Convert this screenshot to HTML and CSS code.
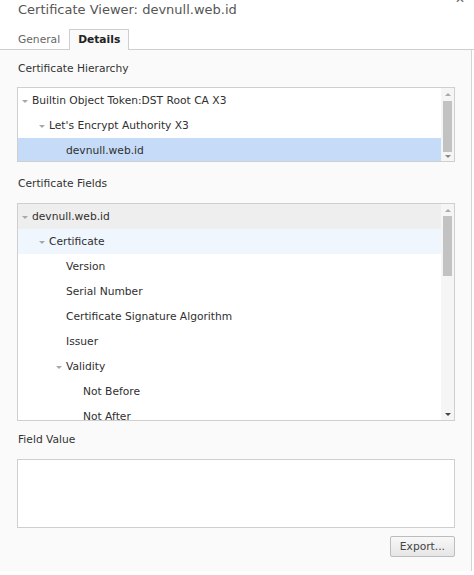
FILE: index.html
```html
<!DOCTYPE html>
<html lang="en">
<head>
    <meta charset="UTF-8">
    <title>Certificate Viewer: devnull.web.id</title>
    <link rel="stylesheet" href="styles.css">
</head>
<body>
<!-- title bar -->
<div class="titlebar">
    <div class="title">Certificate Viewer: devnull.web.id</div>
    <div class="close">✕</div>
</div>

<!-- tabs -->
<div class="tabs">
    <div class="tab">General</div>
    <div class="tab active">Details</div>
</div>

<div class="panel">
    <div class="section-label first">Certificate Hierarchy</div>
    <div class="tree hierarchy">
        <div class="rows">
            <div class="row lv0"><span class="twisty"></span>Builtin Object Token:DST Root CA X3</div>
            <div class="row lv1"><span class="twisty"></span>Let's Encrypt Authority X3</div>
            <div class="row lv2 selected"><span class="leaf"></span>devnull.web.id</div>
        </div>
        <div class="scrollbar">
            <div class="sb-btn up"><span class="arrow-up light"></span></div>
            <div class="sb-thumb"></div>
            <div class="sb-space"></div>
            <div class="sb-btn down"><span class="arrow-down"></span></div>
        </div>
    </div>

    <div class="section-label">Certificate Fields</div>
    <div class="tree fields">
        <div class="rows">
            <div class="row lv0 inactive"><span class="twisty"></span>devnull.web.id</div>
            <div class="row lv1 hover"><span class="twisty"></span>Certificate</div>
            <div class="row lv2"><span class="leaf"></span>Version</div>
            <div class="row lv2"><span class="leaf"></span>Serial Number</div>
            <div class="row lv2"><span class="leaf"></span>Certificate Signature Algorithm</div>
            <div class="row lv2"><span class="leaf"></span>Issuer</div>
            <div class="row lv2"><span class="twisty"></span>Validity</div>
            <div class="row lv3"><span class="leaf"></span>Not Before</div>
            <div class="row lv3"><span class="leaf"></span>Not After</div>
        </div>
        <div class="scrollbar">
            <div class="sb-btn up"><span class="arrow-up light"></span></div>
            <div class="sb-thumb"></div>
            <div class="sb-space"></div>
            <div class="sb-btn down"><span class="arrow-down dark"></span></div>
        </div>
    </div>

    <div class="section-label">Field Value</div>
    <div class="value-box"></div>

    <div class="buttons">
        <button type="button">Export...</button>
    </div>
</div>
</body>
</html>
```

FILE: styles.css
```css
body {
    margin: 0;
    width: 474px;
    font-family: "DejaVu Sans", "Liberation Sans", sans-serif;
    font-size: 10.7px;
    color: #333;
    background-color: #fff;
}

/* title bar */
.titlebar {
    display: flex;
    justify-content: space-between;
    height: 29px;
    padding-left: 18px;
}

.title {
    font-size: 13px;
    line-height: 20px;
    color: #555;
}

.close {
    font-size: 12px;
    line-height: 12px;
    margin-top: -7px;
    margin-right: 9px;
    color: #666;
}

/* tabs */
.tabs {
    display: flex;
    height: 20px;
    padding-left: 9px;
    border-bottom: 1px solid #cfcfcf;
}

.tab {
    height: 19px;
    line-height: 19px;
    padding: 0 8px;
    border: 1px solid transparent;
    border-bottom: none;
    color: #666;
}

.tab.active {
    height: 20px;
    margin-bottom: -1px;
    border-color: #cfcfcf;
    background-color: #fafafa;
    color: #222;
    font-weight: bold;
}

/* content */
.panel {
    width: 438px;
    padding: 8px 16px 14px 17px;
    background-color: #fafafa;
    border-right: 1px solid #d4d4d4;
}

.section-label {
    line-height: 22px;
    padding-left: 1px;
    margin-top: 8px;
    margin-bottom: 8px;
}

.section-label.first {
    margin-top: 0;
    margin-bottom: 7px;
}

.tree + .section-label {
    margin-top: 11px;
}

.tree.fields + .section-label {
    margin-top: 8px;
}

/* tree views */
.tree {
    display: flex;
    border: 1px solid #cfcfcf;
    background-color: #fff;
    overflow: hidden;
}

.tree.hierarchy {
    height: 73px;
}

.tree.fields {
    height: 216px;
}

.rows {
    flex: 1;
    overflow: hidden;
}

.row {
    height: 25px;
    line-height: 25px;
    white-space: nowrap;
    color: #2f2f2f;
}

.row.lv0 { padding-left: 4px; }
.row.lv1 { padding-left: 21px; }
.row.lv2 { padding-left: 38px; }
.row.lv3 { padding-left: 55px; }

.row.selected {
    background-color: #c6dbf7;
}

.row.inactive {
    background-color: #eeeeee;
}

.row.hover {
    background-color: #f0f6fe;
}

.twisty,
.leaf {
    display: inline-block;
    width: 10px;
    vertical-align: middle;
}

.twisty::before {
    content: "";
    display: block;
    width: 0;
    height: 0;
    border-left: 3px solid transparent;
    border-right: 3px solid transparent;
    border-top: 3px solid #a8a8a8;
}

/* scrollbar */
.scrollbar {
    width: 13px;
    display: flex;
    flex-direction: column;
    background-color: #f5f5f5;
}

.sb-btn {
    display: flex;
    justify-content: center;
    align-items: center;
}

.hierarchy .sb-btn.up { height: 13px; }
.hierarchy .sb-btn.down { height: 9px; }
.hierarchy .sb-thumb { height: 51px; }

.fields .sb-btn.up { height: 12px; }
.fields .sb-btn.down { height: 12px; }
.fields .sb-thumb { height: 60px; }

.sb-thumb {
    margin: 0 2px;
    background-color: #c2c2c2;
}

.sb-space {
    flex: 1;
}

.arrow-up {
    width: 0;
    height: 0;
    border-left: 3px solid transparent;
    border-right: 3px solid transparent;
    border-bottom: 3px solid #777;
}

.arrow-down {
    width: 0;
    height: 0;
    border-left: 3px solid transparent;
    border-right: 3px solid transparent;
    border-top: 3px solid #888;
}

.arrow-up.light {
    border-bottom-color: #aaa;
}

.arrow-down.dark {
    border-top-color: #444;
}

/* field value */
.value-box {
    height: 67px;
    border: 1px solid #cfcfcf;
    background-color: #fff;
}

.buttons {
    display: flex;
    justify-content: flex-end;
    margin-top: 8px;
}

button {
    height: 21px;
    padding: 0 9px;
    border: 1px solid #bdbdbd;
    border-radius: 2px;
    background: linear-gradient(#f8f8f8, #e6e6e6);
    font-family: inherit;
    font-size: 10.7px;
    line-height: 19px;
    color: #444;
}
```
